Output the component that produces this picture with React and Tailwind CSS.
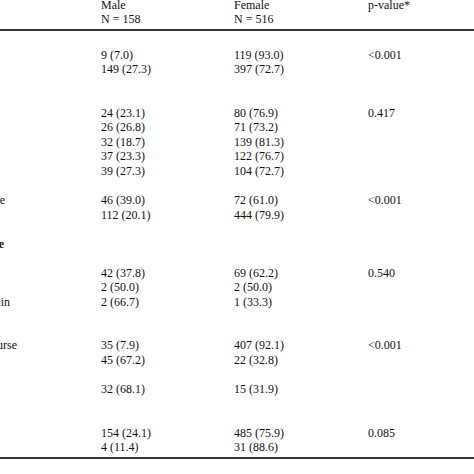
import React from "react";

const rows = [
  { label: "Profession", bold: true },
  { label: "Physician", male: "9 (7.0)", female: "119 (93.0)", p: "<0.001" },
  { label: "Nurse", male: "149 (27.3)", female: "397 (72.7)" },
  {},
  { label: "Age group", bold: true },
  { label: "20-29", male: "24 (23.1)", female: "80 (76.9)", p: "0.417" },
  { label: "30-39", male: "26 (26.8)", female: "71 (73.2)" },
  { label: "40-49", male: "32 (18.7)", female: "139 (81.3)" },
  { label: "50-59", male: "37 (23.3)", female: "122 (76.7)" },
  { label: "60+", male: "39 (27.3)", female: "104 (72.7)" },
  {},
  { label: "Single", end: 96, male: "46 (39.0)", female: "72 (61.0)", p: "<0.001" },
  { label: "Married", male: "112 (20.1)", female: "444 (79.9)" },
  {},
  { label: "Place of practice", bold: true, end: 97 },
  {},
  { label: "Hospital", male: "42 (37.8)", female: "69 (62.2)", p: "0.540" },
  { label: "Clinic", male: "2 (50.0)", female: "2 (50.0)" },
  { label: "Private domain", end: 91, male: "2 (66.7)", female: "1 (33.3)" },
  {},
  {},
  { label: "Nurse", end: 84, male: "35 (7.9)", female: "407 (92.1)", p: "<0.001" },
  { label: "Doctor", male: "45 (67.2)", female: "22 (32.8)" },
  {},
  { label: "Other", male: "32 (68.1)", female: "15 (31.9)" },
  {},
  {},
  { label: "Yes", male: "154 (24.1)", female: "485 (75.9)", p: "0.085" },
  { label: "No", male: "4 (11.4)", female: "31 (88.6)" },
];

const Label = ({ row }) => (
  <div className="flex justify-end overflow-hidden whitespace-nowrap">
    <span
      className={`shrink-0 ${row.bold ? "font-bold" : ""}`}
      style={{ marginRight: row.end ?? 200 }}
    >
      {row.label}
    </span>
  </div>
);

export default function App() {
  return (
    <div
      className="w-[474px] h-[474px] overflow-hidden bg-white text-[#111] text-[12px]"
      style={{ fontFamily: '"Liberation Serif", "Times New Roman", serif' }}
    >
      {/* header */}
      <div className="grid grid-cols-[101px_133px_134px_1fr] leading-[14px] -mt-[2px]">
        <div />
        <div>
          <div>Male</div>
          <div>N = 158</div>
        </div>
        <div>
          <div>Female</div>
          <div>N = 516</div>
        </div>
        <div>p-value*</div>
      </div>
      <div className="h-[2px] bg-[#333] mt-[3px]" />

      {/* body */}
      <div className="pt-[2px]">
        {rows.map((row, i) => (
          <div
            key={i}
            className="grid grid-cols-[101px_133px_134px_1fr] h-[14.56px] leading-[14.56px]"
          >
            {row.label ? <Label row={row} /> : <div />}
            <div>{row.male}</div>
            <div>{row.female}</div>
            <div>{row.p}</div>
          </div>
        ))}
      </div>
      <div className="h-[2px] bg-[#333] mt-[2px]" />
    </div>
  );
}
